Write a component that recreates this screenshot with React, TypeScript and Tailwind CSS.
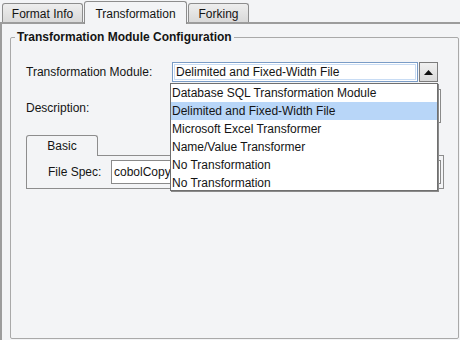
import React from 'react';

const tabs = [
  { label: 'Format Info', w: 'w-[81px]', active: false },
  { label: 'Transformation', w: 'w-[103px]', active: true },
  { label: 'Forking', w: 'w-[61px]', active: false },
];

const modules = [
  'Database SQL Transformation Module',
  'Delimited and Fixed-Width File',
  'Microsoft Excel Transformer',
  'Name/Value Transformer',
  'No Transformation',
  'No Transformation',
];

// ─── Top tab strip ────────────────────────────────────────────────────────────
function TabStrip() {
  return (
    <div className="flex items-end h-[22px] pl-[2px] relative z-10">
      {tabs.map((t) =>
        t.active ? (
          <div
            key={t.label}
            className={`${t.w} h-[23px] -mb-[2px] mx-[1px] flex items-start justify-center pt-[3px] bg-[#f3f4f6] border border-b-0 border-[#8d8d8d] rounded-t-[3px]`}
          >
            {t.label}
          </div>
        ) : (
          <div
            key={t.label}
            className={`${t.w} h-[19px] flex items-center justify-center pt-[1px] bg-gradient-to-b from-[#eeeeee] to-[#d9d9d9] border border-b-0 border-[#8d8d8d] rounded-t-[3px]`}
          >
            {t.label}
          </div>
        )
      )}
    </div>
  );
}

// ─── Combo box with the open list ─────────────────────────────────────────────
function ModuleCombo() {
  return (
    <div className="flex w-[266px] h-[20px] gap-[1px]">
      <div className="flex-1 border border-[#7a9cc6] bg-white p-[1px]">
        <div className="h-full border border-[#c8dcf4] flex items-center pl-[1px] leading-none">
          Delimited and Fixed-Width File
        </div>
      </div>
      <div className="w-[19px] border border-[#7c7c7c] bg-gradient-to-b from-[#f0f0f0] to-[#dadada] flex items-center justify-center">
        <svg width="9" height="5" viewBox="0 0 9 5">
          <path d="M0 5 L4.5 0 L9 5 Z" fill="#111" />
        </svg>
      </div>
    </div>
  );
}

function ModuleList() {
  return (
    <div className="absolute left-[170px] top-[83px] w-[268px] h-[108px] bg-white border border-[#6f6f6f] shadow-[1px_1px_0_#8a8a8a] overflow-hidden">
      {modules.map((m, i) => (
        <div
          key={i}
          className={`h-[18px] flex items-center pl-[1px] whitespace-nowrap leading-[14px] ${i === 1 ? 'bg-[#b8d6f8]' : ''}`}
        >
          {m}
        </div>
      ))}
    </div>
  );
}

export default function App() {
  return (
    <div className="relative w-[460px] h-[340px] bg-[#f3f4f6] text-[12px] text-[#141414] font-['Liberation_Sans',Arial,sans-serif] overflow-hidden">
      <TabStrip />

      {/* Tab content panel */}
      <div className="h-[318px] border-t-2 border-l-2 border-[#9c9c9c] pl-[8px] pr-[1px] pt-[6px]">
        <fieldset className="h-[309px] border border-[#a9a9a9] rounded-[2px]">
          <legend className="ml-[4px] px-[2px] font-bold text-[12px] leading-[14px]">
            Transformation Module Configuration
          </legend>

          <div className="pl-[15px] pt-[18px]">
            <div className="flex items-center h-[20px]">
              <span className="w-[146px]">Transformation Module:</span>
              <ModuleCombo />
            </div>

            <div className="flex items-center mt-[7px] h-[34px]">
              <span className="w-[146px] pt-[4px]">Description:</span>
              <div className="w-[269px] h-full border border-[#8a8a8a] bg-white" />
            </div>

            {/* Inner tabbed pane */}
            <div className="mt-[12px] w-[418px]">
              <div className="flex">
                <div className="w-[72px] h-[21px] -mb-[1px] flex items-center justify-center bg-[#f3f4f6] border border-b-0 border-[#8d8d8d] rounded-t-[3px] relative z-10">
                  Basic
                </div>
              </div>
              <div className="h-[34px] border border-[#8d8d8d] flex items-center pl-[21px] pr-[2px]">
                <span className="w-[63px]">File Spec:</span>
                <div className="flex-1 h-[24px] border border-[#8a8a8a] bg-white flex items-center pl-[2px] leading-[14px]">
                  cobolCopy
                </div>
              </div>
            </div>
          </div>
        </fieldset>
      </div>

      <ModuleList />
    </div>
  );
}
